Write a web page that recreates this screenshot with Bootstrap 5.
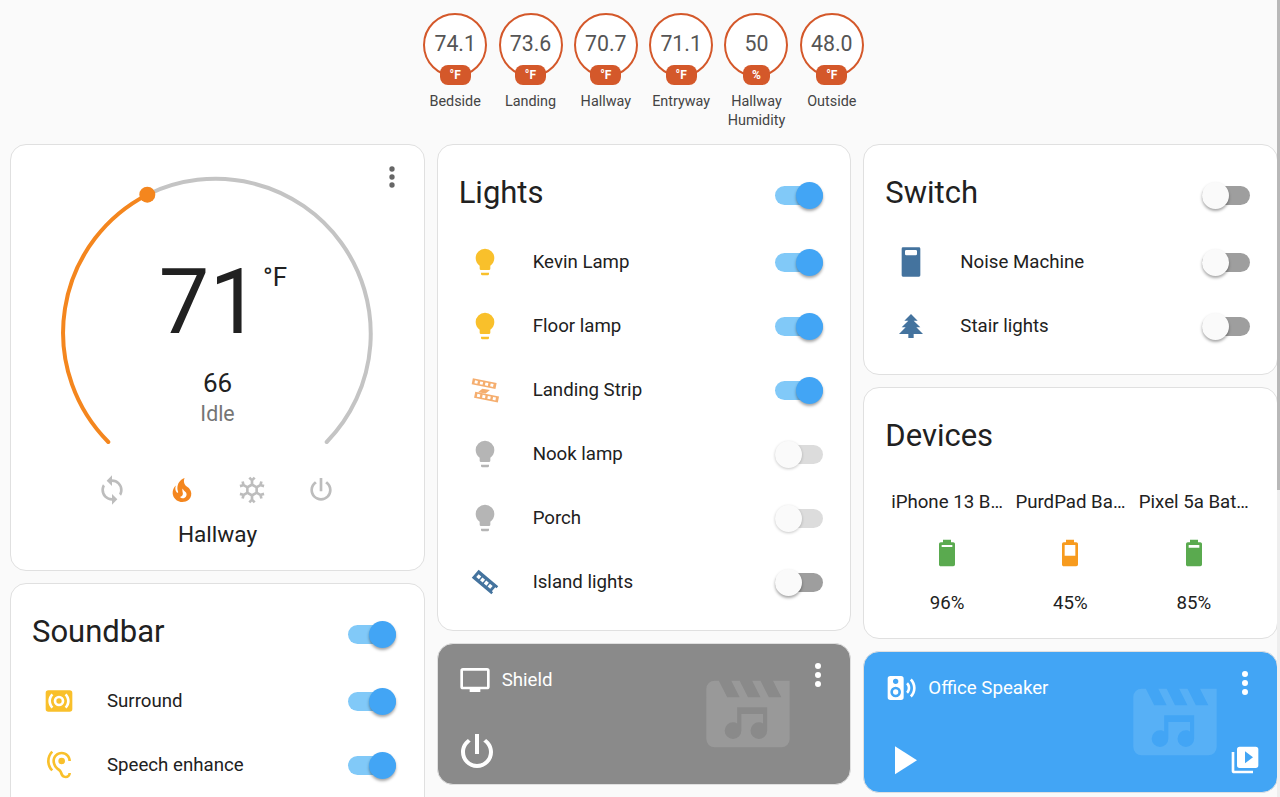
<!DOCTYPE html>
<html lang="en">
<head>
<meta charset="utf-8">
<title>Dashboard</title>
<link href="https://cdn.jsdelivr.net/npm/bootstrap@5.3.0/dist/css/bootstrap.min.css" rel="stylesheet">
<style>
html,body{height:797px;overflow:hidden;background:#fafafa;}
body{font-family:Roboto,"Liberation Sans",sans-serif;color:#212121;font-size:18.67px;}
svg{display:block;fill:currentColor;flex:none;}
.sensor-strip{padding:13px 0 0 7px;height:144px;}
.sensor-item{width:75.33px;text-align:center;font-size:14.4px;line-height:19px;color:#444;}
.sensor-ring{width:64px;height:64px;border:2px solid #d4582a;border-radius:50%;background:#fff;margin:0 auto 5px;font-size:21.3px;color:#555;display:flex;flex-direction:column;align-items:center;}
.sensor-val{height:50px;flex:none;line-height:58px;}
.sensor-pill{background:#d4582a;color:#fff;font-size:12px;font-weight:700;height:20px;line-height:20px;border-radius:8px;min-width:31px;padding:0 6px;}
.sensor-pill.narrow{min-width:27px;}
.sensor-text{padding-top:10px;}
.dash{padding:0 2px 0 10px;gap:12px;}
.dash-col{width:414.67px;gap:12px;}
.tile{background:#fff;border:1px solid #e0e0e0;border-radius:16px;overflow:hidden;flex:none;}
.tile-head{height:68px;padding:0 27px 0 21px;}
.tile-title{font-size:31px;line-height:40px;padding-bottom:5px;}
.tile-rows{padding:1px 27px 16px 31px;}
.ent-row{height:64px;}
.ent-icon{width:32px;height:32px;margin-right:32px;}
.soundbar .tile-head{padding-right:28px;}
.soundbar .tile-rows{padding-left:32px;padding-right:28px;}
.switch-rows .ent-icon{margin-right:33px;}
.c-on{color:#f9c02b;}.c-off{color:#b5b5b5;}.c-blue{color:#44739e;}.c-strip{color:#f5ae6f;}
.tog{width:48px;height:19px;border-radius:10px;flex:none;}
.tog-knob{width:27px;height:27px;border-radius:50%;flex:none;box-shadow:0 2px 3px rgba(0,0,0,.35);}
.tog-on{background:#81c9f8;justify-content:flex-end;}
.tog-on .tog-knob{background:#42a5f5;}
.tog-off{background:#9e9e9e;}
.tog-dim{background:#dcdcdc;}
.tog-off .tog-knob,.tog-dim .tog-knob{background:#fafafa;}
.tog-dim .tog-knob{box-shadow:0 1px 3px rgba(0,0,0,.22);}
.stack{display:grid;}
.stack>*{grid-area:1/1;}
.thermo{height:427px;}
.thermo-text{padding-top:111px;}
.thermo-num{font-size:90px;line-height:93px;font-weight:400;}
.thermo-unit{font-size:26px;line-height:28px;margin:7px 0 0 3px;}
.thermo-row{padding-left:11px;}
.thermo-set{font-size:26px;line-height:30px;margin-top:19px;}
.thermo-state{font-size:21.3px;line-height:30px;color:#757575;margin-top:1px;}
.thermo-modes{margin-top:45px;padding-right:1.5px;gap:37.6px;color:#bdbdbd;}
.thermo-name{font-size:22.6px;line-height:28px;margin-top:15px;}
.c-heat{color:#f4861e;}
.thermo-dots{color:#666;margin:16px 16px 0 0;justify-self:end;align-self:start;}
.gauge-track{fill:none;stroke:#c4c4c4;stroke-width:4;stroke-linecap:round;}
.gauge-fill{fill:none;stroke:#f4861e;stroke-width:4;stroke-linecap:round;}
.gauge-dot{fill:#f4861e;}
.dev-grid{padding:0 5px 0 21px;}
.dev-cell{width:123.4px;text-align:center;}
.dev-name{white-space:nowrap;line-height:26px;margin-top:17px;}
.dev-icon{margin:22px auto 21px;}
.dev-pct{line-height:26px;padding-bottom:22px;}
.media{height:142px;border-color:#e0e0e0;color:#fff;}
.media-grey{background:#8a8a8a;}
.media-blue{background:#42a5f5;}
.media-art{justify-self:end;margin:20px 52px 0 0;align-self:start;}
.media-grey .art-body{fill:#999;}.media-grey .art-note{fill:#8a8a8a;}
.media-blue .art-body{fill:#57b0f6;}.media-blue .art-note{fill:#42a5f5;}
.media-top{padding:13px 14px 0 21px;}
.media-id{margin-top:7px;gap:11px;height:32px;}
.media-foot{padding:0 16px 8px 15px;}
.queue-btn{margin-bottom:8px;}
.soundbar{height:300px;}
.scroll-track{position:fixed;right:0;top:0;width:3.4px;height:797px;background:#eee;}
.scroll-thumb{height:490px;background:#b8b8b8;}
</style>
</head>
<body>
<div class="sensor-strip d-flex justify-content-center align-items-start">
  <div class="sensor-item"><div class="sensor-ring"><div class="sensor-val">74.1</div><div class="sensor-pill">°F</div></div><div class="sensor-text">Bedside</div></div>
  <div class="sensor-item"><div class="sensor-ring"><div class="sensor-val">73.6</div><div class="sensor-pill">°F</div></div><div class="sensor-text">Landing</div></div>
  <div class="sensor-item"><div class="sensor-ring"><div class="sensor-val">70.7</div><div class="sensor-pill">°F</div></div><div class="sensor-text">Hallway</div></div>
  <div class="sensor-item"><div class="sensor-ring"><div class="sensor-val">71.1</div><div class="sensor-pill">°F</div></div><div class="sensor-text">Entryway</div></div>
  <div class="sensor-item"><div class="sensor-ring"><div class="sensor-val">50</div><div class="sensor-pill narrow">%</div></div><div class="sensor-text">Hallway Humidity</div></div>
  <div class="sensor-item"><div class="sensor-ring"><div class="sensor-val">48.0</div><div class="sensor-pill">°F</div></div><div class="sensor-text">Outside</div></div>
</div>

<div class="dash d-flex align-items-start">
  <!-- column 1 -->
  <div class="dash-col d-flex flex-column">
    <div class="tile thermo stack">
      <svg width="413" height="425" viewBox="0 0 413 425">
        <path class="gauge-track" d="M136.3 49.7A155 155 0 0 1 315.7 297"/>
        <path class="gauge-fill" d="M97.3 297A155 155 0 0 1 136.3 49.7"/>
        <circle class="gauge-dot" cx="136.3" cy="49.7" r="8"/>
      </svg>
      <div class="thermo-text d-flex flex-column align-items-center">
        <div class="thermo-row d-flex align-items-start"><span class="thermo-num">71</span><span class="thermo-unit">°F</span></div>
        <div class="thermo-set">66</div>
        <div class="thermo-state">Idle</div>
        <div class="thermo-modes d-flex">
          <svg width="32" height="32" viewBox="0 0 24 24"><path d="M12,18A6,6 0 0,1 6,12C6,11 6.25,10.03 6.7,9.2L5.24,7.74C4.46,8.97 4,10.43 4,12A8,8 0 0,0 12,20V23L16,19L12,15M12,4V1L8,5L12,9V6A6,6 0 0,1 18,12C18,13 17.75,13.97 17.3,14.8L18.76,16.26C19.54,15.03 20,13.57 20,12A8,8 0 0,0 12,4Z"/></svg>
          <svg class="c-heat" width="32" height="32" viewBox="0 0 24 24"><path d="M17.66 11.2C17.43 10.9 17.15 10.64 16.89 10.38C16.22 9.78 15.46 9.35 14.82 8.72C13.33 7.26 13 4.85 13.95 3C13 3.23 12.17 3.75 11.46 4.32C8.87 6.4 7.85 10.07 9.07 13.22C9.11 13.32 9.15 13.42 9.15 13.55C9.15 13.77 9 13.97 8.8 14.05C8.57 14.15 8.33 14.09 8.14 13.93C8.08 13.88 8.04 13.83 8 13.76C6.87 12.33 6.69 10.28 7.45 8.64C5.78 10 4.87 12.3 5 14.47C5.06 14.97 5.12 15.47 5.29 15.97C5.43 16.57 5.7 17.17 6 17.7C7.08 19.43 8.95 20.67 10.96 20.92C13.1 21.19 15.39 20.8 17.03 19.32C18.86 17.66 19.5 15 18.56 12.72L18.43 12.46C18.22 12 17.66 11.2 17.66 11.2M14.5 17.5C14.22 17.74 13.76 18 13.4 18.1C12.28 18.5 11.16 17.94 10.5 17.28C11.69 17 12.4 16.12 12.61 15.23C12.78 14.43 12.46 13.77 12.33 13C12.21 12.26 12.23 11.63 12.5 10.94C12.69 11.32 12.89 11.7 13.13 12C13.9 13 15.11 13.44 15.37 14.8C15.41 14.94 15.43 15.08 15.43 15.23C15.46 16.05 15.1 16.95 14.5 17.5H14.5Z"/></svg>
          <svg width="32" height="32" viewBox="0 0 24 24"><path d="M20.79,13.95L18.46,14.57L16.46,13.44V10.56L18.46,9.43L20.79,10.05L21.31,8.12L19.54,7.65L20,5.88L18.07,5.36L17.45,7.69L15.45,8.82L13,7.38V5.12L14.71,3.41L13.29,2L12,3.29L10.71,2L9.29,3.41L11,5.12V7.38L8.5,8.82L6.5,7.69L5.92,5.36L4,5.88L4.47,7.65L2.7,8.12L3.22,10.05L5.55,9.43L7.55,10.56V13.45L5.55,14.58L3.22,13.96L2.7,15.89L4.47,16.36L4,18.12L5.93,18.64L6.55,16.31L8.55,15.18L11,16.62V18.88L9.29,20.59L10.71,22L12,20.71L13.29,22L14.7,20.59L13,18.88V16.62L15.5,15.17L17.5,16.3L18.12,18.63L20,18.12L19.53,16.35L21.3,15.88L20.79,13.95M9.5,10.56L12,9.11L14.5,10.56V13.44L12,14.89L9.5,13.44V10.56Z"/></svg>
          <svg width="32" height="32" viewBox="0 0 24 24"><path d="M16.56,5.44L15.11,6.89C16.84,7.94 18,9.83 18,12A6,6 0 0,1 12,18C8.69,18 6,15.31 6,12C6,9.83 7.16,7.94 8.88,6.88L7.44,5.44C5.36,6.88 4,9.28 4,12A8,8 0 0,0 12,20A8,8 0 0,0 20,12C20,9.28 18.64,6.88 16.56,5.44M13,3H11V13H13"/></svg>
        </div>
        <div class="thermo-name">Hallway</div>
      </div>
      <svg class="thermo-dots" width="32" height="32" viewBox="0 0 24 24"><path d="M12,16A2,2 0 0,1 14,18A2,2 0 0,1 12,20A2,2 0 0,1 10,18A2,2 0 0,1 12,16M12,10A2,2 0 0,1 14,12A2,2 0 0,1 12,14A2,2 0 0,1 10,12A2,2 0 0,1 12,10M12,4A2,2 0 0,1 14,6A2,2 0 0,1 12,8A2,2 0 0,1 10,6A2,2 0 0,1 12,4Z"/></svg>
    </div>

    <div class="tile soundbar pt-3">
      <div class="tile-head d-flex align-items-center justify-content-between">
        <div class="tile-title">Soundbar</div>
        <div class="tog tog-on d-flex align-items-center"><div class="tog-knob"></div></div>
      </div>
      <div class="tile-rows">
        <div class="ent-row d-flex align-items-center">
          <svg class="ent-icon c-on" viewBox="0 0 24 24"><path d="M20,4H4A2,2 0 0,0 2,6V18A2,2 0 0,0 4,20H20A2,2 0 0,0 22,18V6A2,2 0 0,0 20,4M7.76,16.24L6.35,17.65C4.78,16.1 4,14.05 4,12C4,9.95 4.78,7.9 6.34,6.34L7.75,7.75C6.59,8.93 6,10.46 6,12C6,13.54 6.59,15.07 7.76,16.24M12,16A4,4 0 0,1 8,12A4,4 0 0,1 12,8A4,4 0 0,1 16,12A4,4 0 0,1 12,16M17.66,17.66L16.25,16.25C17.41,15.07 18,13.54 18,12C18,10.46 17.41,8.93 16.24,7.76L17.65,6.35C19.22,7.9 20,9.95 20,12C20,14.05 19.22,16.1 17.66,17.66M12,10A2,2 0 0,0 10,12A2,2 0 0,0 12,14A2,2 0 0,0 14,12A2,2 0 0,0 12,10Z"/></svg>
          <div class="flex-grow-1">Surround</div>
          <div class="tog tog-on d-flex align-items-center"><div class="tog-knob"></div></div>
        </div>
        <div class="ent-row d-flex align-items-center">
          <svg class="ent-icon c-on" viewBox="0 0 24 24"><path d="M17,20C16.71,20 16.44,19.94 16.24,19.85C15.53,19.48 15.03,18.97 14.53,17.47C14,15.91 13.06,15.18 12.14,14.47C11.35,13.86 10.53,13.23 9.82,11.94C9.29,10.98 9,9.93 9,9C9,6.2 11.2,4 14,4C16.8,4 19,6.2 19,9H21C21,5.07 17.93,2 14,2C10.07,2 7,5.07 7,9C7,10.26 7.38,11.65 8.07,12.9C9,14.55 10.05,15.38 10.92,16.05C11.73,16.67 12.31,17.12 12.63,18.1C13.23,19.92 14,20.94 15.36,21.65C15.88,21.88 16.43,22 17,22A4,4 0 0,0 21,18H19A2,2 0 0,1 17,20M7.64,2.64L6.22,1.22C4.23,3.21 3,5.96 3,9C3,12.04 4.23,14.79 6.22,16.78L7.63,15.37C6,13.74 5,11.5 5,9C5,6.5 6,4.26 7.64,2.64M11.5,9A2.5,2.5 0 0,0 14,11.5A2.5,2.5 0 0,0 16.5,9A2.5,2.5 0 0,0 14,6.5A2.5,2.5 0 0,0 11.5,9Z"/></svg>
          <div class="flex-grow-1">Speech enhance</div>
          <div class="tog tog-on d-flex align-items-center"><div class="tog-knob"></div></div>
        </div>
      </div>
    </div>
  </div>

  <!-- column 2 -->
  <div class="dash-col d-flex flex-column">
    <div class="tile pt-3">
      <div class="tile-head d-flex align-items-center justify-content-between">
        <div class="tile-title">Lights</div>
        <div class="tog tog-on d-flex align-items-center"><div class="tog-knob"></div></div>
      </div>
      <div class="tile-rows">
        <div class="ent-row d-flex align-items-center">
          <svg class="ent-icon c-on" viewBox="0 0 24 24"><path d="M12,2A7,7 0 0,0 5,9C5,11.38 6.19,13.47 8,14.74V17A1,1 0 0,0 9,18H15A1,1 0 0,0 16,17V14.74C17.81,13.47 19,11.38 19,9A7,7 0 0,0 12,2M9,21A1,1 0 0,0 10,22H14A1,1 0 0,0 15,21V20H9V21Z"/></svg>
          <div class="flex-grow-1">Kevin Lamp</div>
          <div class="tog tog-on d-flex align-items-center"><div class="tog-knob"></div></div>
        </div>
        <div class="ent-row d-flex align-items-center">
          <svg class="ent-icon c-on" viewBox="0 0 24 24"><path d="M12,2A7,7 0 0,0 5,9C5,11.38 6.19,13.47 8,14.74V17A1,1 0 0,0 9,18H15A1,1 0 0,0 16,17V14.74C17.81,13.47 19,11.38 19,9A7,7 0 0,0 12,2M9,21A1,1 0 0,0 10,22H14A1,1 0 0,0 15,21V20H9V21Z"/></svg>
          <div class="flex-grow-1">Floor lamp</div>
          <div class="tog tog-on d-flex align-items-center"><div class="tog-knob"></div></div>
        </div>
        <div class="ent-row d-flex align-items-center">
          <svg class="ent-icon c-strip" viewBox="0 0 24 24"><path transform="translate(2.9 3.2) rotate(11.4)" fill-rule="evenodd" d="M0 0H18.2V4.6H0ZM1.9 1.2h2.2v2.2h-2.2ZM5.9 1.2h2.2v2.2h-2.2ZM9.9 1.2h2.2v2.2h-2.2ZM13.9 1.2h2.2v2.2h-2.2Z"/><path transform="translate(4.7 13.3) rotate(11.4)" fill-rule="evenodd" d="M0 0H18.2V4.6H0ZM1.9 1.2h2.2v2.2h-2.2ZM5.9 1.2h2.2v2.2h-2.2ZM9.9 1.2h2.2v2.2h-2.2ZM13.9 1.2h2.2v2.2h-2.2Z"/><path d="M10 11L15.7 12L12.5 14.6L6.75 13.6Z"/></svg>
          <div class="flex-grow-1">Landing Strip</div>
          <div class="tog tog-on d-flex align-items-center"><div class="tog-knob"></div></div>
        </div>
        <div class="ent-row d-flex align-items-center">
          <svg class="ent-icon c-off" viewBox="0 0 24 24"><path d="M12,2A7,7 0 0,0 5,9C5,11.38 6.19,13.47 8,14.74V17A1,1 0 0,0 9,18H15A1,1 0 0,0 16,17V14.74C17.81,13.47 19,11.38 19,9A7,7 0 0,0 12,2M9,21A1,1 0 0,0 10,22H14A1,1 0 0,0 15,21V20H9V21Z"/></svg>
          <div class="flex-grow-1">Nook lamp</div>
          <div class="tog tog-dim d-flex align-items-center"><div class="tog-knob"></div></div>
        </div>
        <div class="ent-row d-flex align-items-center">
          <svg class="ent-icon c-off" viewBox="0 0 24 24"><path d="M12,2A7,7 0 0,0 5,9C5,11.38 6.19,13.47 8,14.74V17A1,1 0 0,0 9,18H15A1,1 0 0,0 16,17V14.74C17.81,13.47 19,11.38 19,9A7,7 0 0,0 12,2M9,21A1,1 0 0,0 10,22H14A1,1 0 0,0 15,21V20H9V21Z"/></svg>
          <div class="flex-grow-1">Porch</div>
          <div class="tog tog-dim d-flex align-items-center"><div class="tog-knob"></div></div>
        </div>
        <div class="ent-row d-flex align-items-center">
          <svg class="ent-icon c-blue" viewBox="0 0 24 24"><path transform="translate(12 12) rotate(40)" fill-rule="evenodd" d="M-9.6 -4H9.6V-2H8.4V2H9.6V4H-9.6ZM-7.4 -1.4h2.6v2.8h-2.6ZM-3.7 -1.4h2.6v2.8h-2.6ZM0 -1.4h2.6v2.8h-2.6ZM3.7 -1.4h2.6v2.8h-2.6Z"/></svg>
          <div class="flex-grow-1">Island lights</div>
          <div class="tog tog-off d-flex align-items-center"><div class="tog-knob"></div></div>
        </div>
      </div>
    </div>

    <div class="tile media media-grey stack">
      <svg class="media-art" width="100" height="100" viewBox="0 0 24 24"><path class="art-body" d="M18,4L20,8H17L15,4H13L15,8H12L10,4H8L10,8H7L5,4H4A2,2 0 0,0 2,6V18A2,2 0 0,0 4,20H20A2,2 0 0,0 22,18V4H18Z"/><path class="art-note" d="M9.4,10.4H16.6V16H16.6A2,2 0 1 1 14.6,14C15,14 15.3,14.1 15.6,14.3V12H10.4V16A2,2 0 1 1 8.4,14C8.8,14 9.1,14.1 9.4,14.3Z"/></svg>
      <div class="d-flex flex-column justify-content-between">
        <div class="media-top d-flex align-items-start justify-content-between">
          <div class="media-id d-flex align-items-center">
            <svg width="32" height="32" viewBox="0 0 24 24"><path d="M21,17H3V5H21M21,3H3A2,2 0 0,0 1,5V17A2,2 0 0,0 3,19H8V21H16V19H21A2,2 0 0,0 23,17V5A2,2 0 0,0 21,3Z"/></svg>
            <span>Shield</span>
          </div>
          <svg width="36" height="36" viewBox="0 0 24 24"><path d="M12,16A2,2 0 0,1 14,18A2,2 0 0,1 12,20A2,2 0 0,1 10,18A2,2 0 0,1 12,16M12,10A2,2 0 0,1 14,12A2,2 0 0,1 12,14A2,2 0 0,1 10,12A2,2 0 0,1 12,10M12,4A2,2 0 0,1 14,6A2,2 0 0,1 12,8A2,2 0 0,1 10,6A2,2 0 0,1 12,4Z"/></svg>
        </div>
        <div class="media-foot d-flex align-items-end">
          <svg width="48" height="48" viewBox="0 0 24 24"><path d="M16.56,5.44L15.11,6.89C16.84,7.94 18,9.83 18,12A6,6 0 0,1 12,18C8.69,18 6,15.31 6,12C6,9.83 7.16,7.94 8.88,6.88L7.44,5.44C5.36,6.88 4,9.28 4,12A8,8 0 0,0 12,20A8,8 0 0,0 20,12C20,9.28 18.64,6.88 16.56,5.44M13,3H11V13H13"/></svg>
        </div>
      </div>
    </div>
  </div>

  <!-- column 3 -->
  <div class="dash-col d-flex flex-column">
    <div class="tile pt-3">
      <div class="tile-head d-flex align-items-center justify-content-between">
        <div class="tile-title">Switch</div>
        <div class="tog tog-off d-flex align-items-center"><div class="tog-knob"></div></div>
      </div>
      <div class="tile-rows switch-rows">
        <div class="ent-row d-flex align-items-center">
          <svg class="ent-icon c-blue" viewBox="0 0 24 24"><path fill-rule="evenodd" d="M6,1H18A1,1 0 0,1 19,2V22A1,1 0 0,1 18,23H6A1,1 0 0,1 5,22V2A1,1 0 0,1 6,1ZM8.5,3A1,1 0 0,0 7.5,4V6A1,1 0 0,0 8.5,7H15.5A1,1 0 0,0 16.5,6V4A1,1 0 0,0 15.5,3Z"/></svg>
          <div class="flex-grow-1">Noise Machine</div>
          <div class="tog tog-off d-flex align-items-center"><div class="tog-knob"></div></div>
        </div>
        <div class="ent-row d-flex align-items-center">
          <svg class="ent-icon c-blue" viewBox="0 0 24 24"><path d="M10,21V18H3L8,13H5L10,8H7L12,3L17,8H14L19,13H16L21,18H14V21H10Z"/></svg>
          <div class="flex-grow-1">Stair lights</div>
          <div class="tog tog-off d-flex align-items-center"><div class="tog-knob"></div></div>
        </div>
      </div>
    </div>

    <div class="tile pt-3">
      <div class="tile-head d-flex align-items-center">
        <div class="tile-title">Devices</div>
      </div>
      <div class="dev-grid d-flex">
        <div class="dev-cell"><div class="dev-name">iPhone 13 B…</div><svg class="dev-icon" style="color:#5aaa4f" width="32" height="32" viewBox="0 0 24 24"><path d="M16,7.5H8V6H16M16.67,4H15V2H9V4H7.33A1.33,1.33 0 0,0 6,5.33V20.67C6,21.4 6.6,22 7.33,22H16.67A1.33,1.33 0 0,0 18,20.67V5.33C18,4.6 17.4,4 16.67,4Z"/></svg><div class="dev-pct">96%</div></div>
        <div class="dev-cell"><div class="dev-name">PurdPad Ba…</div><svg class="dev-icon" style="color:#f79b1e" width="32" height="32" viewBox="0 0 24 24"><path d="M16,14H8V6H16M16.67,4H15V2H9V4H7.33A1.33,1.33 0 0,0 6,5.33V20.67C6,21.4 6.6,22 7.33,22H16.67A1.33,1.33 0 0,0 18,20.67V5.33C18,4.6 17.4,4 16.67,4Z"/></svg><div class="dev-pct">45%</div></div>
        <div class="dev-cell"><div class="dev-name">Pixel 5a Bat…</div><svg class="dev-icon" style="color:#5aaa4f" width="32" height="32" viewBox="0 0 24 24"><path d="M16,8H8V6H16M16.67,4H15V2H9V4H7.33A1.33,1.33 0 0,0 6,5.33V20.67C6,21.4 6.6,22 7.33,22H16.67A1.33,1.33 0 0,0 18,20.67V5.33C18,4.6 17.4,4 16.67,4Z"/></svg><div class="dev-pct">85%</div></div>
      </div>
    </div>

    <div class="tile media media-blue stack">
      <svg class="media-art" width="100" height="100" viewBox="0 0 24 24"><path class="art-body" d="M18,4L20,8H17L15,4H13L15,8H12L10,4H8L10,8H7L5,4H4A2,2 0 0,0 2,6V18A2,2 0 0,0 4,20H20A2,2 0 0,0 22,18V4H18Z"/><path class="art-note" d="M9.4,10.4H16.6V16H16.6A2,2 0 1 1 14.6,14C15,14 15.3,14.1 15.6,14.3V12H10.4V16A2,2 0 1 1 8.4,14C8.8,14 9.1,14.1 9.4,14.3Z"/></svg>
      <div class="d-flex flex-column justify-content-between">
        <div class="media-top d-flex align-items-start justify-content-between">
          <div class="media-id d-flex align-items-center">
            <svg width="32" height="32" viewBox="0 0 24 24"><path d="M20.07,19.07L18.66,17.66C20.11,16.22 21,14.21 21,12C21,9.78 20.11,7.78 18.66,6.34L20.07,4.93C21.88,6.74 23,9.24 23,12C23,14.76 21.88,17.26 20.07,19.07M17.24,16.24L15.83,14.83C16.55,14.11 17,13.11 17,12C17,10.89 16.55,9.89 15.83,9.17L17.24,7.76C18.33,8.85 19,10.35 19,12C19,13.65 18.33,15.15 17.24,16.24M4,3H12A2,2 0 0,1 14,5V19A2,2 0 0,1 12,21H4A2,2 0 0,1 2,19V5A2,2 0 0,1 4,3M8,5A2,2 0 0,0 6,7A2,2 0 0,0 8,9A2,2 0 0,0 10,7A2,2 0 0,0 8,5M8,11A4,4 0 0,0 4,15A4,4 0 0,0 8,19A4,4 0 0,0 12,15A4,4 0 0,0 8,11M8,13A2,2 0 0,1 10,15A2,2 0 0,1 8,17A2,2 0 0,1 6,15A2,2 0 0,1 8,13Z"/></svg>
            <span>Office Speaker</span>
          </div>
          <svg width="36" height="36" viewBox="0 0 24 24"><path d="M12,16A2,2 0 0,1 14,18A2,2 0 0,1 12,20A2,2 0 0,1 10,18A2,2 0 0,1 12,16M12,10A2,2 0 0,1 14,12A2,2 0 0,1 12,14A2,2 0 0,1 10,12A2,2 0 0,1 12,10M12,4A2,2 0 0,1 14,6A2,2 0 0,1 12,8A2,2 0 0,1 10,6A2,2 0 0,1 12,4Z"/></svg>
        </div>
        <div class="media-foot d-flex align-items-end justify-content-between">
          <svg width="48" height="48" viewBox="0 0 24 24"><path d="M8,5.14V19.14L19,12.14L8,5.14Z"/></svg>
          <svg class="queue-btn" width="32" height="32" viewBox="0 0 24 24"><path d="M4,6H2V20A2,2 0 0,0 4,22H18V20H4M20,2H8A2,2 0 0,0 6,4V16A2,2 0 0,0 8,18H20A2,2 0 0,0 22,16V4A2,2 0 0,0 20,2M12,14.5V5.5L18,10L12,14.5Z"/></svg>
        </div>
      </div>
    </div>
  </div>
</div>
<div class="scroll-track"><div class="scroll-thumb"></div></div>
<script src="https://cdn.jsdelivr.net/npm/bootstrap@5.3.0/dist/js/bootstrap.bundle.min.js"></script>
</body>
</html>
